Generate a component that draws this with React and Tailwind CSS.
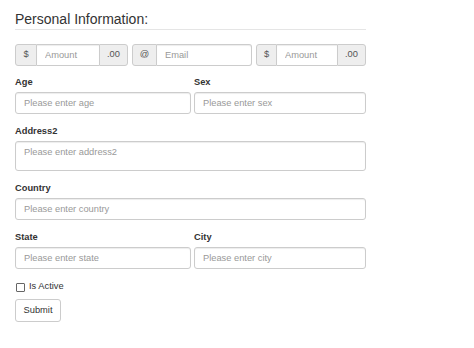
import React from "react";

const font = "font-['Liberation_Sans',Arial,sans-serif]";
const addon =
  "flex items-center justify-center bg-[#eee] border border-[#ccc] text-[#555] text-[9.3px] h-full";
const field =
  "border border-[#ccc] bg-white px-[8px] text-[9.3px] text-[#555] placeholder:text-[#999] outline-none shadow-[inset_0_1px_1px_rgba(0,0,0,0.075)]";

function Label({ children, className = "" }) {
  return (
    <label className={"block font-bold text-[9.3px] leading-[13px] text-[#333] mb-[3px] " + className}>
      {children}
    </label>
  );
}

function TextInput({ placeholder }) {
  return (
    <input
      placeholder={placeholder}
      className={field + " block w-full h-[22px] rounded-[3px]"}
    />
  );
}

function Half({ label, placeholder, width }) {
  return (
    <div className={width}>
      <Label>{label}</Label>
      <TextInput placeholder={placeholder} />
    </div>
  );
}

export default function App() {
  return (
    <div className={"min-h-[348px] bg-white " + font}>
      <form className="ml-[15px] w-[351px] pt-[9px]">
        <h3 className="text-[14px] leading-[20px] text-[#333] border-b border-[#e5e5e5]">
          Personal Information:
        </h3>

        <div className="mt-[14px] flex h-[22px] gap-[4px]">
          <div className="flex h-full w-[113px]">
            <span className={addon + " w-[22px] rounded-l-[3px]"}>$</span>
            <input placeholder="Amount" className={field + " h-full w-[62px] border-x-0 min-w-0"} />
            <span className={addon + " w-[29px] rounded-r-[3px]"}>.00</span>
          </div>
          <div className="flex h-full w-[120px]">
            <span className={addon + " w-[25px] rounded-l-[3px]"}>@</span>
            <input placeholder="Email" className={field + " h-full flex-1 min-w-0 border-l-0 rounded-r-[3px]"} />
          </div>
          <div className="flex h-full w-[110px]">
            <span className={addon + " w-[21px] rounded-l-[3px]"}>$</span>
            <input placeholder="Amount" className={field + " h-full w-[60px] border-x-0 min-w-0"} />
            <span className={addon + " w-[29px] rounded-r-[3px]"}>.00</span>
          </div>
        </div>

        <div className="mt-[10px] flex gap-[3px]">
          <Half label="Age" placeholder="Please enter age" width="w-[176px]" />
          <Half label="Sex" placeholder="Please enter sex" width="w-[172px]" />
        </div>

        <div className="mt-[11px]">
          <Label>Address2</Label>
          <textarea
            placeholder="Please enter address2"
            className={field + " block w-full h-[30px] py-[4px] leading-[13px] rounded-[3px] resize-none"}
          />
        </div>

        <div className="mt-[11px]">
          <Label>Country</Label>
          <TextInput placeholder="Please enter country" />
        </div>

        <div className="mt-[11px] flex gap-[3px]">
          <Half label="State" placeholder="Please enter state" width="w-[176px]" />
          <Half label="City" placeholder="Please enter city" width="w-[172px]" />
        </div>

        <label className="mt-[11px] flex h-[14px] items-center gap-[4px] text-[9.3px] text-[#333]">
          <input
            type="checkbox"
            className="appearance-none w-[9px] h-[9px] border border-[#666] rounded-[1px] bg-white m-0 ml-[1px]"
          />
          Is Active
        </label>

        <button
          type="button"
          className="mt-[5px] h-[23px] w-[46px] border border-[#ccc] rounded-[3px] bg-white text-[9.3px] text-[#333]"
        >
          Submit
        </button>
      </form>
    </div>
  );
}
